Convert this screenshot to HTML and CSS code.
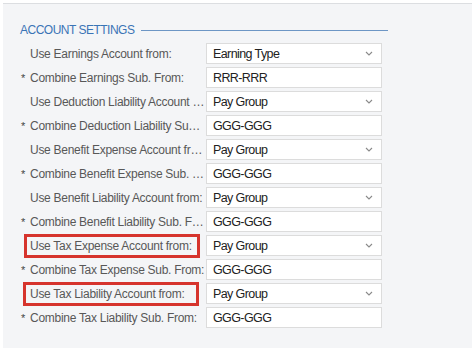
FILE: index.html
```html
<!DOCTYPE html>
<html lang="en">
<head>
    <meta charset="UTF-8">
    <title>Account Settings</title>
    <link rel="stylesheet" href="styles.css">
</head>
<body>
    <div class="panel">
        <div class="section">
            <div class="section-title">ACCOUNT SETTINGS</div>

            <div class="form">
                <div class="row">
                    <label class="label">Use Earnings Account from:</label>
                    <div class="field select">Earning Type<svg class="chevron" viewBox="0 0 8 5"><path d="M1 1l3 3 3-3"/></svg></div>
                </div>
                <div class="row">
                    <label class="label required">Combine Earnings Sub. From:</label>
                    <div class="field">RRR-RRR</div>
                </div>
                <div class="row">
                    <label class="label">Use Deduction Liability Account from:</label>
                    <div class="field select">Pay Group<svg class="chevron" viewBox="0 0 8 5"><path d="M1 1l3 3 3-3"/></svg></div>
                </div>
                <div class="row">
                    <label class="label required">Combine Deduction Liability Sub. From:</label>
                    <div class="field">GGG-GGG</div>
                </div>
                <div class="row">
                    <label class="label">Use Benefit Expense Account from:</label>
                    <div class="field select">Pay Group<svg class="chevron" viewBox="0 0 8 5"><path d="M1 1l3 3 3-3"/></svg></div>
                </div>
                <div class="row">
                    <label class="label required">Combine Benefit Expense Sub. From:</label>
                    <div class="field">GGG-GGG</div>
                </div>
                <div class="row">
                    <label class="label">Use Benefit Liability Account from:</label>
                    <div class="field select">Pay Group<svg class="chevron" viewBox="0 0 8 5"><path d="M1 1l3 3 3-3"/></svg></div>
                </div>
                <div class="row">
                    <label class="label required">Combine Benefit Liability Sub. From:</label>
                    <div class="field">GGG-GGG</div>
                </div>
                <div class="row">
                    <label class="label marked mark-one">Use Tax Expense Account from:</label>
                    <div class="field select">Pay Group<svg class="chevron" viewBox="0 0 8 5"><path d="M1 1l3 3 3-3"/></svg></div>
                </div>
                <div class="row">
                    <label class="label required">Combine Tax Expense Sub. From:</label>
                    <div class="field">GGG-GGG</div>
                </div>
                <div class="row">
                    <label class="label marked mark-two">Use Tax Liability Account from:</label>
                    <div class="field select">Pay Group<svg class="chevron" viewBox="0 0 8 5"><path d="M1 1l3 3 3-3"/></svg></div>
                </div>
                <div class="row">
                    <label class="label required">Combine Tax Liability Sub. From:</label>
                    <div class="field">GGG-GGG</div>
                </div>
            </div>
        </div>
    </div>
</body>
</html>
```

FILE: styles.css
```css
* {
    margin: 0;
    padding: 0;
    box-sizing: border-box;
}

body {
    background: #ffffff;
    font-family: 'Liberation Sans', Arial, sans-serif;
    width: 474px;
    height: 352px;
    overflow: hidden;
}

.panel {
    margin: 3px 2px 0 3px;
    height: 345px;
    background: #f4f5f7;
    border-top: 1px solid #dcdee1;
}

.section {
    padding: 19px 0 0 17px;
}

.section-title {
    display: flex;
    align-items: center;
    width: 368px;
    height: 14px;
    font-size: 12px;
    letter-spacing: -0.5px;
    color: #3a74b6;
}

.section-title::after {
    content: "";
    flex: 1;
    height: 1px;
    margin-left: 7px;
    background: #6d96c5;
}

.form {
    display: flex;
    flex-direction: column;
    gap: 3px;
    margin-top: 6px;
}

.row {
    display: flex;
    align-items: center;
    height: 21px;
}

.label {
    position: relative;
    width: 186px;
    padding: 0 1px 0 10px;
    font-size: 12px;
    letter-spacing: -0.28px;
    color: #585858;
    white-space: nowrap;
    overflow: hidden;
    text-overflow: ellipsis;
}

.label.required::before {
    content: "*";
    position: absolute;
    left: 1px;
    top: 1px;
    font-size: 11px;
    color: #444;
}

.label.marked {
    overflow: visible;
}

.label.marked::after {
    content: "";
    position: absolute;
    top: -5px;
    bottom: -5px;
    border: 3px solid #d6342d;
}

.mark-one::after {
    left: 4px;
    right: 6px;
}

.mark-two::after {
    left: 3px;
    right: 7px;
}

.field {
    display: flex;
    align-items: center;
    justify-content: space-between;
    width: 176px;
    height: 21px;
    padding: 0 8px 0 6px;
    background: #ffffff;
    border: 1px solid #dcdcdc;
    font-size: 12.5px;
    letter-spacing: -0.6px;
    color: #222;
}

.chevron {
    width: 8px;
    height: 5px;
    fill: none;
    stroke: #8a8a8a;
    stroke-width: 1.1;
}
```
